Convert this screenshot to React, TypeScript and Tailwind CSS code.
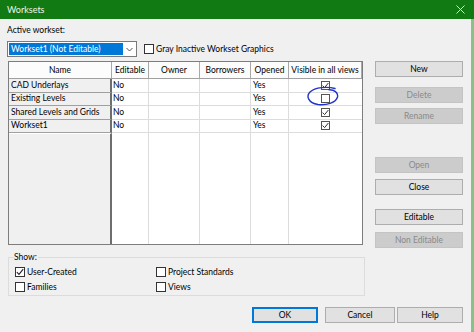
import React from "react";

const Check = ({ checked }: { checked?: boolean }) => (
  <div className="w-[10px] h-[10px] border border-[#333333] bg-white flex items-center justify-center shrink-0">
    {checked && (
      <svg width="8" height="8" viewBox="0 0 8 8">
        <path d="M0.8 4.2 L3 6.4 L7.2 1.2" fill="none" stroke="#222" strokeWidth="1.1" />
      </svg>
    )}
  </div>
);

const Btn = ({ label, disabled, className = "" }: { label: string; disabled?: boolean; className?: string }) => (
  <div
    className={
      "h-[16px] flex items-center justify-center border " +
      (disabled ? "bg-[#cccccc] border-[#c4c4c4] text-[#8a8a8a] " : "bg-[#e1e1e1] border-[#adadad] text-black ") +
      className
    }
  >
    {label}
  </div>
);

const cols = [
  { w: "w-[103px]", h: "Name" },
  { w: "w-[37px]", h: "Editable" },
  { w: "w-[51px]", h: "Owner" },
  { w: "w-[51px]", h: "Borrowers" },
  { w: "w-[38px]", h: "Opened" },
  { w: "w-[75px]", h: "Visible in all views" },
];

const rows = [
  { n: "CAD Underlays", v: true },
  { n: "Existing Levels", v: false },
  { n: "Shared Levels and Grids", v: true },
  { n: "Workset1", v: true },
];

export default function App() {
  return (
    <div className="w-[474px] h-[332px] flex flex-col overflow-hidden whitespace-nowrap font-['Lato',sans-serif] text-[8.5px] leading-[11px] text-black">
      {/* Title bar */}
      <div className="h-[19px] bg-[#117a12] flex items-center justify-between pl-[7px] pr-[9px] shrink-0">
        <span className="text-[#eef6ee] text-[9px]">Worksets</span>
        <svg width="9" height="9" viewBox="0 0 9 9">
          <path d="M0.5 0.5 L8.5 8.5 M8.5 0.5 L0.5 8.5" stroke="#d8ecd8" strokeWidth="1" />
        </svg>
      </div>

      {/* Body */}
      <div className="flex-1 bg-[#f0f0f0] border-r-[3px] border-[#86c486] flex flex-col">
        <div className="pl-[7px] pt-[6px] h-[22px]">Active workset:</div>

        <div className="flex items-center pl-[7px] h-[16px]">
          <div className="w-[130px] h-[16px] border border-[#7a7a7a] bg-white flex items-center p-[1px]">
            <div className="w-[114px] h-full bg-[#0078d7] text-white flex items-center pl-[2px]">
              Workset1 (Not Editable)
            </div>
            <div className="flex-1 flex items-center justify-center">
              <svg width="7" height="5" viewBox="0 0 7 5">
                <path d="M0.5 1 L3.5 4 L6.5 1" fill="none" stroke="#555" strokeWidth="1" />
              </svg>
            </div>
          </div>
          <div className="ml-[7px]">
            <Check />
          </div>
          <span className="ml-[2px]">Gray Inactive Workset Graphics</span>
        </div>

        <div className="flex pl-[8px] mt-[4px]">
          {/* Table */}
          <div className="relative w-[355px] h-[184px] border border-[#7d7d7d] bg-white flex flex-col">
            <div className="flex h-[17px] border-b border-[#a0a0a0] bg-[#fcfcfc] shrink-0">
              {cols.map((c, i) => (
                <div
                  key={c.h}
                  className={c.w + " shrink-0 flex items-center justify-center border-r border-[#a8a8a8] " + (i === 5 ? "flex-1" : "")}
                >
                  {c.h}
                </div>
              ))}
            </div>
            {rows.map((r) => (
              <div key={r.n} className="flex h-[13.5px] shrink-0">
                <div className="w-[103px] shrink-0 bg-[#f0f0f0] border-b border-[#a0a0a0] border-r-2 border-r-[#6e6e6e] pl-[2px] flex items-center">
                  {r.n}
                </div>
                <div className="w-[37px] shrink-0 border-b border-r border-[#dcdcdc] pl-[1px] flex items-center">No</div>
                <div className="w-[51px] shrink-0 border-b border-r border-[#dcdcdc]" />
                <div className="w-[51px] shrink-0 border-b border-r border-[#dcdcdc]" />
                <div className="w-[38px] shrink-0 border-b border-r border-[#dcdcdc] pl-[2px] flex items-center">Yes</div>
                <div className="flex-1 border-b border-[#dcdcdc] flex items-center justify-center">
                  <div className="w-[9px] h-[9px] border border-[#555] bg-white flex items-center justify-center">
                    {r.v && (
                      <svg width="7" height="7" viewBox="0 0 7 7">
                        <path d="M0.6 3.6 L2.6 5.6 L6.4 1" fill="none" stroke="#333" strokeWidth="1" />
                      </svg>
                    )}
                  </div>
                </div>
              </div>
            ))}
            <div className="flex flex-1">
              <div className="w-[103px] shrink-0 bg-[#f0f0f0] border-t border-white border-r-2 border-r-[#6e6e6e]" />
              <div className="w-[37px] shrink-0 border-r border-[#dcdcdc]" />
              <div className="w-[51px] shrink-0 border-r border-[#dcdcdc]" />
              <div className="w-[51px] shrink-0 border-r border-[#dcdcdc]" />
              <div className="w-[38px] shrink-0 border-r border-[#dcdcdc]" />
              <div className="flex-1" />
            </div>
            {/* hand-drawn annotation circle */}
            <svg className="absolute left-[297px] top-[24px]" width="34" height="21" viewBox="0 0 34 21">
              <path
                d="M29 2.5 C 22 0.5, 9 1, 4 6 C 0 10, 2 17, 12 18.5 C 20 19.5, 30 17, 31.5 11 C 32.5 6.5, 28 3.5, 23 3.8"
                fill="none"
                stroke="#2233cc"
                strokeWidth="1.4"
                strokeLinecap="round"
              />
            </svg>
          </div>

          {/* Right buttons */}
          <div className="ml-[12px] w-[88px] flex flex-col">
            <Btn label="New" />
            <Btn label="Delete" disabled className="mt-[10px]" />
            <Btn label="Rename" disabled className="mt-[5px]" />
            <Btn label="Open" disabled className="mt-[33px]" />
            <Btn label="Close" className="mt-[6px]" />
            <Btn label="Editable" className="mt-[14px]" />
            <Btn label="Non Editable" disabled className="mt-[7px]" />
          </div>
        </div>

        {/* Show group */}
        <div className="relative ml-[8px] mt-[9px] w-[357px] h-[39px] border border-[#dcdcdc]">
          <span className="absolute left-[5px] -top-[6px] bg-[#f0f0f0] pr-[1px]">Show:</span>
          <div className="grid grid-cols-[141px_auto] gap-y-[5px] pl-[6px] pt-[9px]">
            <div className="flex items-center h-[10px]">
              <Check checked />
              <span className="ml-[2px]">User-Created</span>
            </div>
            <div className="flex items-center h-[10px]">
              <Check />
              <span className="ml-[2px]">Project Standards</span>
            </div>
            <div className="flex items-center h-[10px]">
              <Check />
              <span className="ml-[2px]">Families</span>
            </div>
            <div className="flex items-center h-[10px]">
              <Check />
              <span className="ml-[2px]">Views</span>
            </div>
          </div>
        </div>

        {/* Bottom buttons */}
        <div className="flex justify-end pr-[8px] mt-[11px]">
          <div className="w-[66px] h-[16px] flex items-center justify-center bg-[#e1e1e1] border-2 border-[#0078d7]">OK</div>
          <div className="ml-[7px] w-[70px] h-[16px] flex items-center justify-center bg-[#e1e1e1] border border-[#adadad]">Cancel</div>
          <div className="ml-[2px] w-[66px] h-[16px] flex items-center justify-center bg-[#e1e1e1] border border-[#adadad]">Help</div>
        </div>
      </div>
    </div>
  );
}
